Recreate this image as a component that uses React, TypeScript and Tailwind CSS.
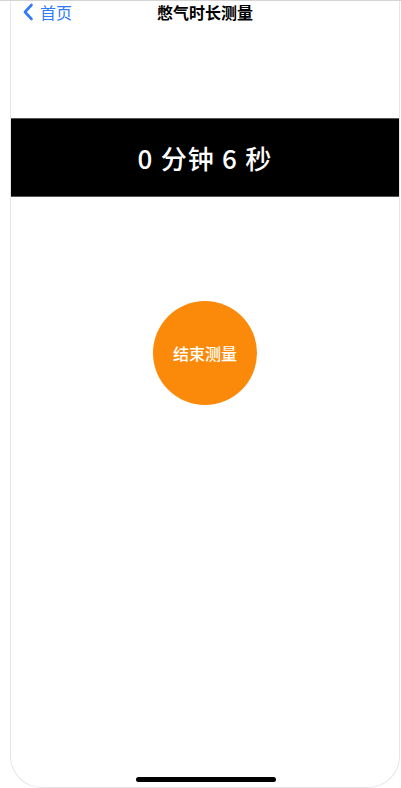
import React from "react";

export default function App() {
  const font = { fontFamily: '"Noto Sans CJK SC", "Noto Sans", sans-serif' };
  return (
    <div className="w-[401px] h-[788px] bg-white overflow-hidden" style={font}>
      <div className="border-t border-[#d4d4d4] h-[788px] pl-[10px] pr-[1px]">
        <div className="relative h-[787px] border-l border-r border-b border-[#e6e6e6] rounded-b-[32px] flex flex-col">
          <div className="relative h-[22px] flex items-center">
            <div className="absolute left-[11px] top-0 h-[22px] flex items-center gap-[6px] text-[#2f7cf6]">
              <svg width="12" height="18" viewBox="0 0 12 18" fill="none">
                <path d="M9.5 2 L3 9 L9.5 16" stroke="#2f7cf6" strokeWidth="2.6" strokeLinecap="round" strokeLinejoin="round" />
              </svg>
              <span className="text-[16px] leading-none">首页</span>
            </div>
            <div className="w-full text-center text-[16px] font-bold leading-none text-black">憋气时长测量</div>
          </div>
          <div className="h-[95px]" />
          <div className="h-[79px] bg-black border-t border-b border-[#555] flex items-center justify-center">
            <span className="text-white text-[26px] font-medium tracking-[1.2px] leading-none">0 分钟 6 秒</span>
          </div>
          <div className="h-[104px]" />
          <div className="flex justify-center">
            <div className="w-[104px] h-[104px] rounded-full bg-[#fc8a0a] flex items-center justify-center">
              <span className="text-white text-[16px] font-medium leading-none">结束测量</span>
            </div>
          </div>
          <div className="absolute bottom-[5px] left-[125px] w-[140px] h-[5px] rounded-full bg-black" />
        </div>
      </div>
    </div>
  );
}
